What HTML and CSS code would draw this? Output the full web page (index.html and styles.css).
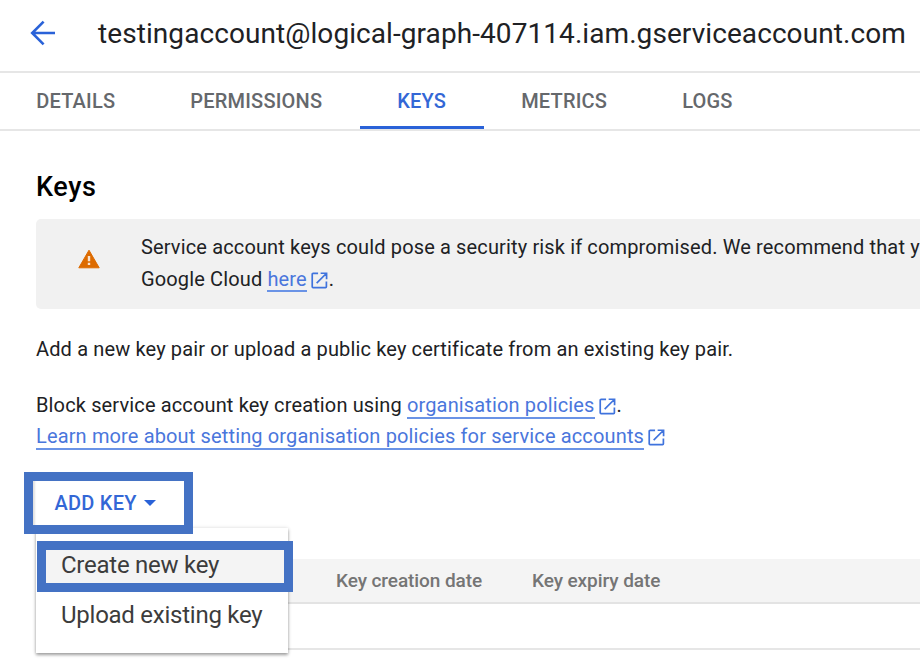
FILE: index.html
```html
<!DOCTYPE html>
<html lang="en">
<head>
    <meta charset="UTF-8">
    <meta name="viewport" content="width=device-width, initial-scale=1.0">
    <title>Service account keys</title>
    <link rel="stylesheet" href="styles.css">
</head>
<body>
    <svg class="defs" width="0" height="0">
        <symbol id="external" viewBox="0 0 18 18">
            <path d="M7.5 1.5H2.2a.9.9 0 0 0-.9.9v13.2c0 .5.4.9.9.9h13.2c.5 0 .9-.4.9-.9V10M10.2 1.3h6.3v6.3M16.2 1.6L6 11.8" />
        </symbol>
    </svg>

    <header class="header">
        <svg class="back" viewBox="0 0 26 26">
            <path d="M25 13H2.2M13.6 1.6L2.2 13l11.4 11.4" />
        </svg>
        <h1 class="title">testingaccount@logical-graph-407114.iam.gserviceaccount.com</h1>
    </header>

    <nav class="tabs">
        <a class="tab details">DETAILS</a>
        <a class="tab permissions">PERMISSIONS</a>
        <a class="tab active">KEYS</a>
        <a class="tab metrics">METRICS</a>
        <a class="tab logs">LOGS</a>
    </nav>

    <main class="content">
        <h2 class="heading">Keys</h2>

        <div class="notice">
            <svg class="warning" viewBox="0 0 22 20">
                <path class="triangle" d="M11 1.2L21.2 18.8H.8z" />
                <path class="mark" d="M11 7v5.2M11 13.8v2.2" />
            </svg>
            <div class="notice-text">
                <div class="risk">Service account keys could pose a security risk if compromised. We recommend that y</div>
                <div class="cloud">Google Cloud <a class="link">here</a><svg class="external"><use href="#external" /></svg>.</div>
            </div>
        </div>

        <p class="text add">Add a new key pair or upload a public key certificate from an existing key pair.</p>
        <p class="text block">Block service account key creation using <a class="link">organisation policies</a><svg class="external"><use href="#external" /></svg>.</p>
        <p class="text learn"><a class="link">Learn more about setting organisation policies for service accounts</a><svg class="external"><use href="#external" /></svg></p>

        <div class="toolbar">
            <button class="add-key">ADD KEY <span class="caret"></span></button>
            <div class="menu">
                <div class="menu-item selected">Create new key</div>
                <div class="menu-item">Upload existing key</div>
            </div>
        </div>

        <div class="table">
            <div class="table-head">
                <span class="col creation">Key creation date</span>
                <span class="col expiry">Key expiry date</span>
            </div>
            <div class="table-row"></div>
        </div>
    </main>
</body>
</html>
```
FILE: styles.css
```css
* {
    box-sizing: border-box;
}

body {
    margin: 0;
    height: 667px;
    overflow: hidden;
    background: #fff;
    color: #202124;
    font-family: Roboto, "Liberation Sans", sans-serif;
    font-size: 20px;
    letter-spacing: 0.14px;
}

.defs {
    display: block;
}

.header {
    display: flex;
    height: 73px;
    padding-left: 30px;
    border-bottom: 2px solid #e6e6e6;
}

.back {
    width: 26px;
    height: 26px;
    margin: 20px 42px 0 0;
    fill: none;
    stroke: #2a62d8;
    stroke-width: 2.6;
}

.title {
    margin: 0;
    font-size: 28px;
    font-weight: 400;
    letter-spacing: 0.075px;
    line-height: 68px;
    white-space: nowrap;
}

.tabs {
    display: flex;
    height: 58px;
    border-bottom: 2px solid #e6e6e6;
}

.tab {
    padding: 0 37.5px;
    color: #65686c;
    font-weight: 500;
    letter-spacing: 0.2px;
    line-height: 56px;
}

.details {
    margin-left: -1.3px;
}

.active {
    border-bottom: 3px solid #2a62d8;
    color: #3367d6;
}

.content {
    padding-left: 36px;
}

.heading {
    margin: 0;
    padding-top: 38px;
    font-size: 27px;
    font-weight: 500;
    letter-spacing: 0.6px;
    line-height: 36px;
    height: 88px;
    color: #000;
}

.notice {
    display: flex;
    height: 90px;
    border-radius: 5px 0 0 5px;
    background: #f1f1f1;
    overflow: hidden;
}

.warning {
    flex: none;
    width: 22px;
    height: 20px;
    margin: 30px 41px 0 42px;
}

.triangle {
    fill: #dd6b00;
    stroke: #dd6b00;
    stroke-linejoin: round;
}

.mark {
    stroke: #f8e3cf;
    stroke-width: 2.4;
}

.notice-text {
    padding-top: 13px;
    line-height: 31px;
    white-space: nowrap;
}

.cloud {
    padding-top: 1px;
}

.cloud .link {
    height: 28px;
}

.text {
    margin: 0;
    line-height: 31px;
    white-space: nowrap;
}

.add {
    margin-top: 25px;
}

.block {
    margin-top: 25px;
}

.link {
    display: inline-block;
    height: 29px;
    border-bottom: 2px solid #6a93e6;
    color: #4a76dc;
}

.external {
    width: 17px;
    height: 17px;
    margin: 0 1px 0 4px;
    vertical-align: -2.5px;
    fill: none;
    stroke: #3f73dd;
    stroke-width: 1.8;
}

.toolbar {
    position: relative;
    height: 107px;
    padding-top: 20px;
}

.add-key {
    display: flex;
    align-items: center;
    position: relative;
    z-index: 2;
    width: 169px;
    height: 62px;
    margin-left: -12px;
    padding: 0 0 0 21.5px;
    border: 9px solid #4472c4;
    background: #fff;
    box-shadow: inset 3px 0 2px -1px rgba(0, 0, 0, 0.12);
    color: #3367d6;
    font: 500 20px Roboto, sans-serif;
    letter-spacing: 0.25px;
}

.caret {
    margin-left: 7px;
    border: 6px solid transparent;
    border-top-color: #2a62d8;
    border-bottom: 0;
}

.menu {
    position: absolute;
    z-index: 1;
    top: 76px;
    left: 0;
    width: 252px;
    height: 125px;
    padding-top: 13px;
    background: #fff;
    box-shadow: 0 2px 3px rgba(0, 0, 0, 0.35), 0 0 4px rgba(0, 0, 0, 0.12);
    color: #3c3c3c;
    font-size: 24px;
    letter-spacing: -0.25px;
}

.menu-item {
    height: 49px;
    padding-left: 25px;
    line-height: 46px;
    white-space: nowrap;
}

.selected {
    width: 256px;
    height: 51px;
    margin-left: 1px;
    padding-left: 15px;
    border: 9px solid #4472c4;
    background: #f4f4f4;
    line-height: 31px;
}

.table-head {
    display: flex;
    height: 45px;
    padding-left: 300px;
    border-bottom: 2px solid #e3e3e3;
    background: #f4f4f4;
    color: #757575;
    font-size: 19px;
    font-weight: 500;
    letter-spacing: -0.08px;
    line-height: 43px;
    white-space: nowrap;
}

.creation {
    width: 196px;
}

.table-row {
    height: 46px;
    border-bottom: 2px solid #e6e6e6;
}
```
